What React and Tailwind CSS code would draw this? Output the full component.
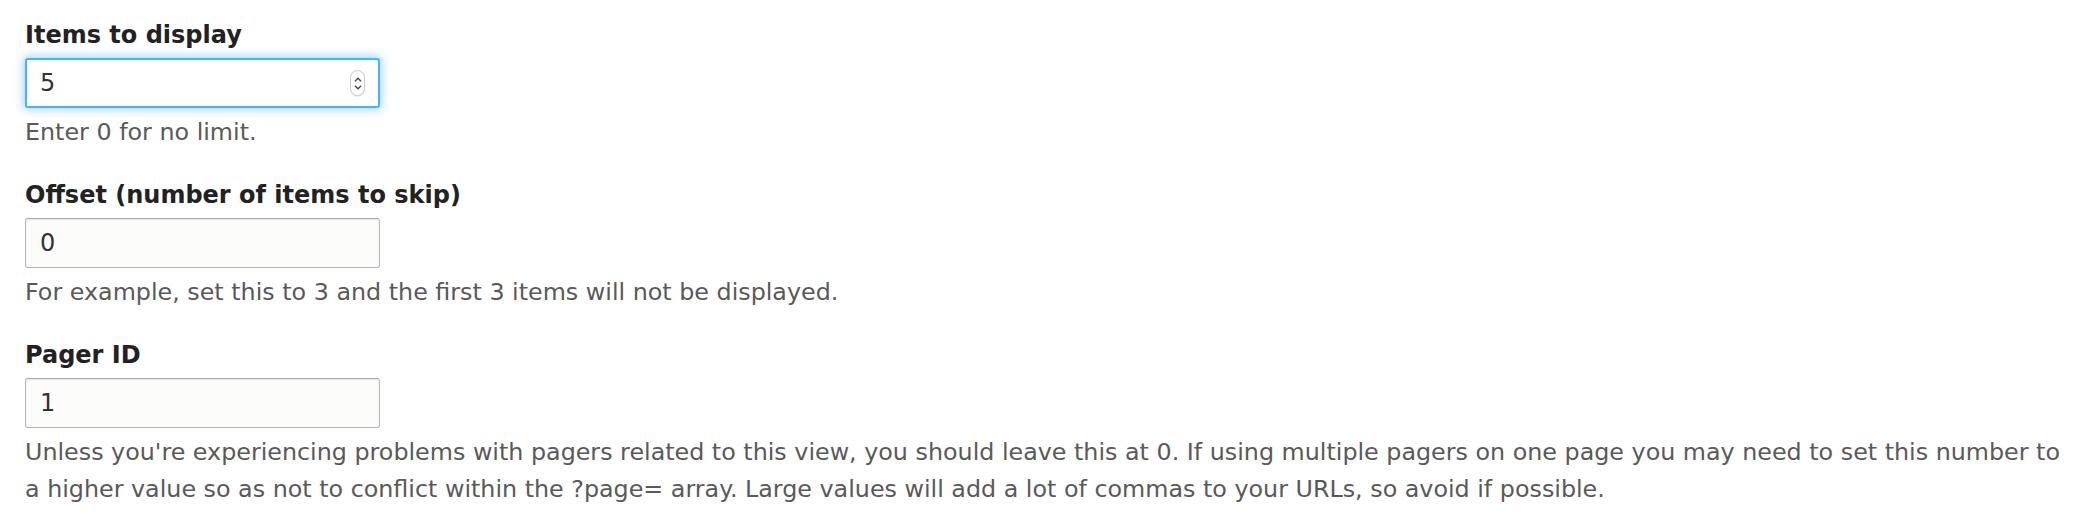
import React from "react";

const FIELDS = [
  {
    label: "Items to display",
    value: "5",
    focused: true,
    description: "Enter 0 for no limit.",
  },
  {
    label: "Offset (number of items to skip)",
    value: "0",
    description: "For example, set this to 3 and the first 3 items will not be displayed.",
  },
  {
    label: "Pager ID",
    value: "1",
    description:
      "Unless you're experiencing problems with pagers related to this view, you should leave this at 0. If using multiple pagers on one page you may need to set this number to a higher value so as not to conflict within the ?page= array. Large values will add a lot of commas to your URLs, so avoid if possible.",
  },
];

const Spinner = () => (
  <div className="w-[15px] h-[26px] rounded-[8px] border border-[#c8c8c8] bg-white flex flex-col items-center justify-center gap-[3px] shadow-[0_1px_1px_rgba(0,0,0,0.08)]">
    <svg width="8" height="5" viewBox="0 0 8 5" fill="none">
      <path d="M1 4.2 4 1.2 7 4.2" stroke="#444" strokeWidth="1.3" />
    </svg>
    <svg width="8" height="5" viewBox="0 0 8 5" fill="none">
      <path d="M1 0.8 4 3.8 7 0.8" stroke="#444" strokeWidth="1.3" />
    </svg>
  </div>
);

function Field({ label, value, focused, description }) {
  return (
    <div className="flex flex-col">
      <label className="text-[24px] leading-[30px] font-bold text-[#222]">{label}</label>
      <div
        className={`mt-[8px] w-[355px] h-[50px] rounded-[3px] flex items-center pr-[13px] ${
          focused
            ? "border-2 border-[#40b6ff] bg-white shadow-[0_0_8px_2px_rgba(64,170,255,0.45)] pl-[13px]"
            : "border border-[#b8b8b8] border-t-[#a8a8a8] bg-[#fcfcfa] shadow-[inset_0_1px_2px_rgba(0,0,0,0.08)] pl-[14px]"
        }`}
      >
        <span className="flex-1 text-[24px] text-[#333]">{value}</span>
        {focused && <Spinner />}
      </div>
      <p className="mt-[6px] text-[23.8px] leading-[37px] text-[#595959]">{description}</p>
    </div>
  );
}

export default function App() {
  return (
    <div
      className="min-h-screen bg-white pl-[25px] pr-[15px] pt-[20px] flex flex-col gap-[29px]"
      style={{ fontFamily: '"DejaVu Sans", sans-serif' }}
    >
      {FIELDS.map(f => (
        <Field key={f.label} {...f} />
      ))}
    </div>
  );
}
